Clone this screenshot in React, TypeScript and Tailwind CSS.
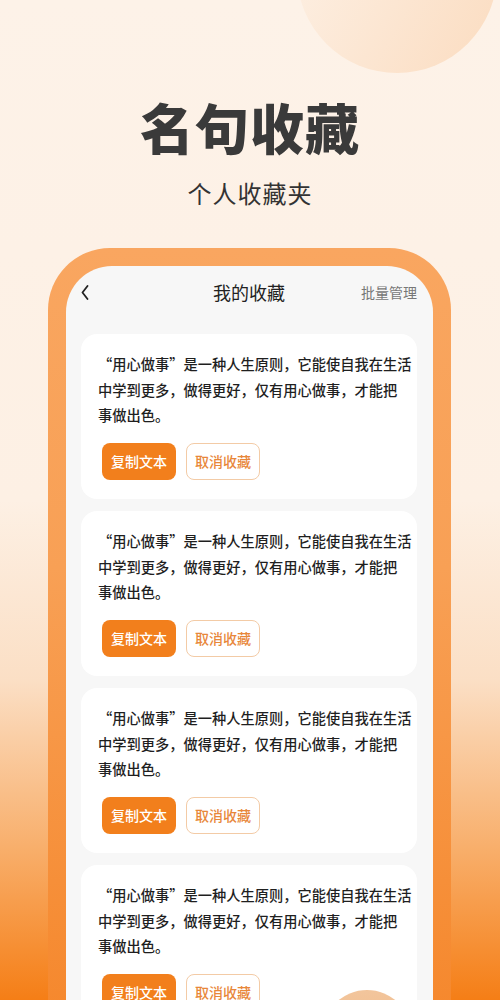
const lines = [
  "“用心做事”是一种人生原则，它能使自我在生活",
  "中学到更多，做得更好，仅有用心做事，才能把",
  "事做出色。",
];

const QuoteCard = () => (
  <div className="h-[165px] shrink-0 rounded-[16px] bg-white pl-[17px] pr-[4px] pt-[17px]">
    <p className="whitespace-nowrap text-[14.25px] font-medium leading-[25.5px] text-[#1f1f1f]">
      {lines.map((l) => (
        <span key={l} className="block">
          {l}
        </span>
      ))}
    </p>
    <div className="ml-[4px] mt-[15px] flex gap-[10px]">
      <button className="h-[37px] w-[74px] rounded-[8px] bg-[#f27f1c] text-[14px] font-medium text-white">
        复制文本
      </button>
      <button className="h-[37px] w-[74px] rounded-[8px] border border-[#f3cba6] bg-white text-[14px] font-medium text-[#e8873a]">
        取消收藏
      </button>
    </div>
  </div>
);

const App = () => {
  return (
    <div
      lang="zh-CN"
      className="relative h-[1000px] w-[500px] overflow-hidden bg-[linear-gradient(180deg,#fdf2e8_0%,#fdf0e4_50%,#fbdfc5_68%,#f8ae6a_85%,#f57e16_100%)] font-['Noto_Sans_CJK_SC','Noto_Sans',sans-serif]"
    >
      {/* top decoration */}
      <div className="absolute left-[297px] top-[-127px] h-[200px] w-[200px] rounded-full bg-[linear-gradient(120deg,#fdf0e4_10%,#fbdcc0_100%)]" />

      <div className="relative flex flex-col items-center pt-[96px]">
        <h1 className="text-[54px] font-black leading-[62px] tracking-[1px] text-[#3a3a3a]">
          名句收藏
        </h1>
        <p className="mt-[19px] text-[24px] leading-[32px] tracking-[1px] text-[#333]">
          个人收藏夹
        </p>
      </div>

      {/* phone frame */}
      <div className="relative ml-[48px] mt-[39px] h-[800px] w-[403px] rounded-t-[62px] bg-[linear-gradient(180deg,#f9a660_0%,#f8a055_40%,#f5862a_100%)] px-[18px] pt-[18px]">
        <div className="h-full rounded-t-[46px] bg-[#f7f7f7]">
          <div className="grid h-[52px] grid-cols-[1fr_auto_1fr] items-center pl-[15px] pr-[16px]">
            <svg width="8" height="15" viewBox="0 0 8 15" fill="none">
              <path d="M6.5 1 L1.5 7.5 L6.5 14" stroke="#222" strokeWidth="1.8" strokeLinecap="round" strokeLinejoin="round" />
            </svg>
            <span className="text-[18px] text-[#222]">我的收藏</span>
            <span className="justify-self-end text-[14px] text-[#777]">批量管理</span>
          </div>
          <div className="mt-[16px] flex flex-col gap-[12px] pl-[15px] pr-[16px]">
            <QuoteCard />
            <QuoteCard />
            <QuoteCard />
            <QuoteCard />
          </div>
        </div>
      </div>

      {/* bottom decoration */}
      <div className="absolute left-[322px] top-[990px] h-[90px] w-[90px] rounded-full bg-[linear-gradient(180deg,#f2c59c_0%,#f4b57c_100%)]" />
    </div>
  );
};

export default App;
